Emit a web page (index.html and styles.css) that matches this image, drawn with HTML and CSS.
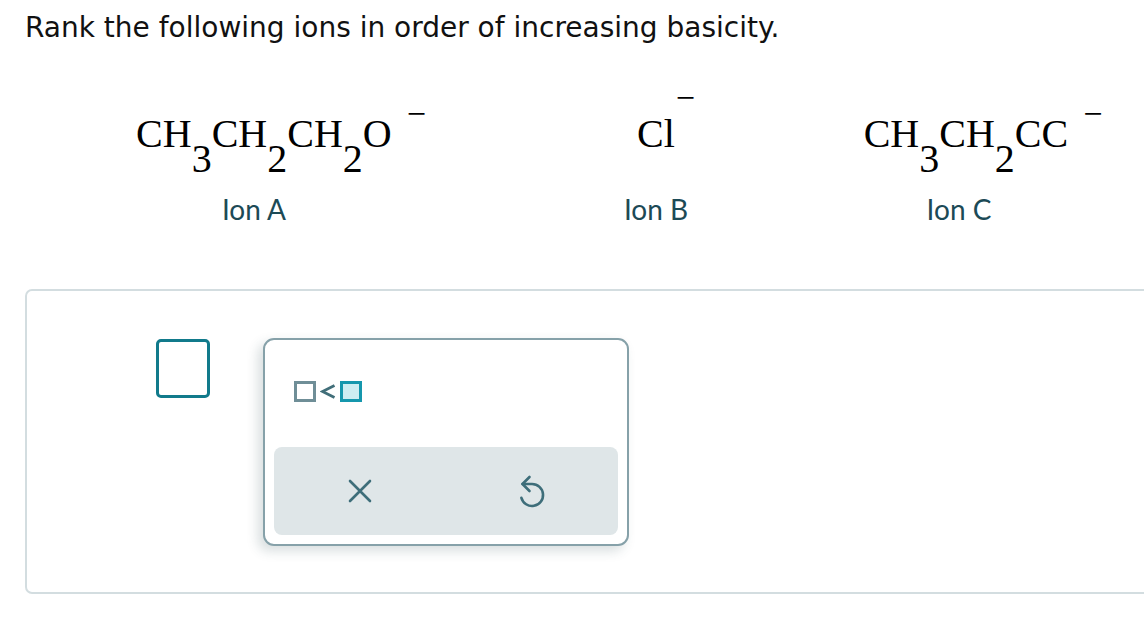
FILE: index.html
```html
<!DOCTYPE html>
<html lang="en">
<head>
<meta charset="utf-8">
<title>Rank ions by basicity</title>
<link rel="stylesheet" href="styles.css">
</head>
<body>
<p class="prompt">Rank the following ions in order of increasing basicity.</p>

<div class="ions">
  <div class="ion ion-a">
    <div class="formula">CH<span class="sub">3</span>CH<span class="sub">2</span>CH<span class="sub">2</span>O<span class="charge">−</span></div>
    <div class="label">Ion A</div>
  </div>
  <div class="ion ion-b">
    <div class="formula">Cl<span class="charge charge-high">−</span></div>
    <div class="label">Ion B</div>
  </div>
  <div class="ion ion-c">
    <div class="formula">CH<span class="sub">3</span>CH<span class="sub">2</span>CC<span class="charge">−</span></div>
    <div class="label">Ion C</div>
  </div>
</div>

<div class="answer">
  <div class="slot"></div>
  <div class="palette">
    <div class="palette-top">
      <div class="template">
        <span class="box box-empty"></span>
        <svg class="lt" width="16" height="15" viewBox="0 0 16 15"><polyline points="14.5,1.5 2.5,7.5 14.5,13.5" fill="none" stroke="#416e79" stroke-width="2.8" stroke-linejoin="miter"/></svg>
        <span class="box box-active"></span>
      </div>
    </div>
    <div class="actions">
      <div class="action">
        <svg width="24" height="24" viewBox="0 0 24 24"><path d="M2 2 L22 22 M22 2 L2 22" fill="none" stroke="#3e6e7a" stroke-width="2.6" stroke-linecap="round"/></svg>
      </div>
      <div class="action">
        <svg width="26" height="33" viewBox="0 0 26 33"><path d="M3.5 9 H13 A11 11 0 1 1 2.4 22.8" fill="none" stroke="#3e6e7a" stroke-width="2.6" stroke-linecap="round" stroke-linejoin="round"/><path d="M10.5 2 L3.5 9 L10.5 16" fill="none" stroke="#3e6e7a" stroke-width="2.6" stroke-linecap="round" stroke-linejoin="round"/></svg>
      </div>
    </div>
  </div>
</div>
</body>
</html>
```

FILE: styles.css
```css
html, body {
  margin: 0;
  padding: 0;
  background: #ffffff;
}

body {
  width: 1144px;
  height: 618px;
  overflow: hidden;
}

.prompt {
  margin: 0;
  padding: 12px 0 0 25px;
  font-family: "DejaVu Sans", Verdana, sans-serif;
  font-size: 28px;
  line-height: 32px;
  color: #111111;
}

.ions {
  display: flex;
  margin-top: 50px;
  padding-left: 104px;
}

.ion {
  width: 300px;
  display: flex;
  flex-direction: column;
  align-items: center;
}

.ion-b { margin-left: 102px; }
.ion-c { margin-left: 3px; }

.formula {
  height: 80px;
  font-family: "Liberation Serif", "Times New Roman", serif;
  font-size: 40px;
  line-height: 80px;
  color: #000000;
  white-space: nowrap;
}

.ion-a .formula { padding-left: 54px; }
.ion-b .formula { padding-left: 20px; }
.ion-c .formula { padding-left: 48px; }

.sub {
  vertical-align: -25px;
  line-height: 0;
}

.charge {
  font-size: 34px;
  line-height: 0;
  vertical-align: 22px;
  margin-left: 15px;
}

.charge-high {
  vertical-align: 38px;
  margin-left: 1px;
}

.label {
  margin-top: 18px;
  font-family: Lato, "Open Sans", sans-serif;
  font-size: 28px;
  line-height: 34px;
  color: #1c4a56;
}

.answer {
  box-sizing: border-box;
  margin: 63px -40px 0 25px;
  height: 305px;
  border: 2px solid #d3dde0;
  border-radius: 7px;
  display: flex;
  align-items: flex-start;
  gap: 53px;
  padding: 47px 0 0 129px;
}

.slot {
  margin-top: 1px;
  width: 48px;
  height: 53px;
  border: 3px solid #117a8b;
  border-radius: 5px;
  flex: none;
}

.palette {
  box-sizing: content-box;
  width: 344px;
  height: 195px;
  border: 2px solid #86a1a9;
  border-radius: 11px;
  background: #ffffff;
  box-shadow: -5px 5px 12px rgba(40, 70, 80, 0.18);
  display: flex;
  flex-direction: column;
  padding: 0 9px 9px 9px;
  flex: none;
}

.palette-top {
  height: 107px;
  padding-left: 20px;
}

.template {
  display: flex;
  align-items: center;
  gap: 4px;
  margin-top: 41px;
  height: 21px;
}

.box {
  width: 16px;
  height: 15px;
  border: 3px solid #6f8e97;
  background: #ffffff;
}

.box-active {
  border-color: #1597ad;
  background: #cdedf2;
}

.lt {
  display: block;
}

.actions {
  flex: 1;
  display: flex;
  background: #dfe6e8;
  border-radius: 8px;
}

.action {
  flex: 1;
  display: flex;
  align-items: center;
  justify-content: center;
}

.action svg {
  display: block;
}
```
